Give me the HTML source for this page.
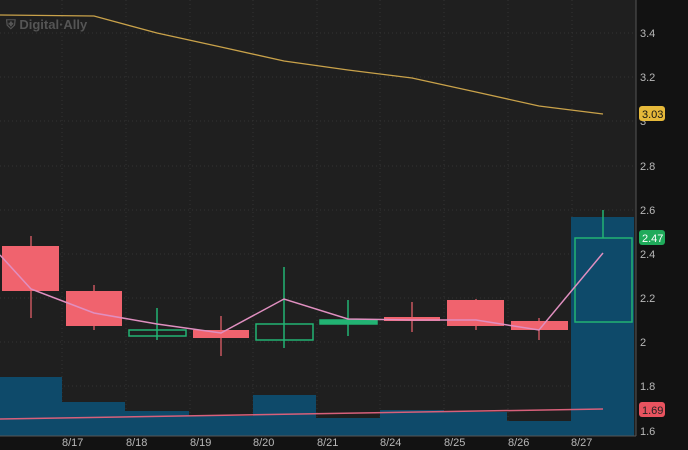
<!DOCTYPE html><html><head><style>
body{margin:0;width:688px;height:450px;background:#141414;overflow:hidden;font-family:"Liberation Sans",sans-serif}
</style></head><body>
<svg width="688" height="450" xmlns="http://www.w3.org/2000/svg" style="display:block">
<rect x="0" y="0" width="688" height="450" fill="#121212"/>
<rect x="0" y="0" width="636" height="436" fill="#1f1f1f"/>
<g stroke="#333" stroke-dasharray="1,3" stroke-width="1">
<line x1="0" x2="636" y1="33" y2="33"/><line x1="0" x2="636" y1="77" y2="77"/><line x1="0" x2="636" y1="121" y2="121"/><line x1="0" x2="636" y1="166" y2="166"/><line x1="0" x2="636" y1="210" y2="210"/><line x1="0" x2="636" y1="254" y2="254"/><line x1="0" x2="636" y1="298" y2="298"/><line x1="0" x2="636" y1="342" y2="342"/><line x1="0" x2="636" y1="386" y2="386"/>
<line y1="0" y2="436" x1="62" x2="62"/><line y1="0" y2="436" x1="126" x2="126"/><line y1="0" y2="436" x1="190" x2="190"/><line y1="0" y2="436" x1="253" x2="253"/><line y1="0" y2="436" x1="317" x2="317"/><line y1="0" y2="436" x1="380" x2="380"/><line y1="0" y2="436" x1="444" x2="444"/><line y1="0" y2="436" x1="508" x2="508"/><line y1="0" y2="436" x1="572" x2="572"/>
</g>
<g fill="#0e4a6a">
<rect x="0" y="377" width="62" height="59"/><rect x="62" y="402" width="63" height="34"/><rect x="125" y="411" width="64" height="25"/><rect x="189" y="416" width="64" height="20"/><rect x="253" y="395" width="63" height="41"/><rect x="316" y="418" width="64" height="18"/><rect x="380" y="410" width="64" height="26"/><rect x="444" y="412" width="63" height="24"/><rect x="507" y="421" width="64" height="15"/><rect x="571" y="217" width="63" height="219"/>
</g>
<polyline points="0,419 603,409" fill="none" stroke="#d8607a" stroke-width="1.5"/>
<text x="6" y="29" font-size="13" font-weight="bold" fill="#555">⛨ Digital·Ally</text>
<polyline points="0,15 94,16 157,33 221,47 284,61 348,70 412,78 476,92 539,106 603,114" fill="none" stroke="#c9a24a" stroke-width="1.3"/>
<g stroke="#f0636e" stroke-width="1.2">
<line x1="31" x2="31" y1="236" y2="318"/><line x1="94" x2="94" y1="285" y2="330"/><line x1="221" x2="221" y1="316" y2="356"/><line x1="412" x2="412" y1="302" y2="332"/><line x1="476" x2="476" y1="299" y2="330"/><line x1="539" x2="539" y1="318" y2="340"/>
</g>
<g fill="#f0636e">
<rect x="2" y="246" width="57" height="45"/><rect x="66" y="291" width="56" height="35"/><rect x="193" y="330" width="56" height="8"/><rect x="384" y="317" width="56" height="4"/><rect x="447" y="300" width="57" height="26"/><rect x="511" y="321" width="57" height="9"/>
</g>
<g stroke="#22b373" stroke-width="1.5" fill="none">
<line x1="157" x2="157" y1="308" y2="340"/><rect x="129" y="330" width="57" height="6"/>
<line x1="284" x2="284" y1="267" y2="348"/><rect x="256" y="324" width="57" height="16"/>
<line x1="348" x2="348" y1="300" y2="336"/><rect x="320" y="320" width="57" height="4" fill="#22b373"/>
<line x1="603" x2="603" y1="210" y2="238"/><rect x="575" y="238" width="57" height="84"/>
</g>
<polyline points="0,255 31,289 94,313 157,324 221,333 284,299 348,319 412,320 476,320 539,330 603,253" fill="none" stroke="#e08fc0" stroke-width="1.5"/>
<line x1="636" x2="636" y1="0" y2="436" stroke="#555"/>
<line x1="0" x2="636" y1="436" y2="436" stroke="#555"/>
<g fill="#b8b8b8" font-size="11">
<text x="640" y="37">3.4</text><text x="640" y="81">3.2</text><text x="640" y="125">3</text><text x="640" y="170">2.8</text><text x="640" y="214">2.6</text><text x="640" y="258">2.4</text><text x="640" y="302">2.2</text><text x="640" y="346">2</text><text x="640" y="390">1.8</text><text x="640" y="435">1.6</text>
<text x="62" y="446">8/17</text><text x="126" y="446">8/18</text><text x="190" y="446">8/19</text><text x="253" y="446">8/20</text><text x="317" y="446">8/21</text><text x="380" y="446">8/24</text><text x="444" y="446">8/25</text><text x="508" y="446">8/26</text><text x="571" y="446">8/27</text>
</g>
<rect x="639" y="106" width="26" height="15" rx="3" fill="#e6b93a"/><text x="642" y="118" font-size="11" fill="#111">3.03</text>
<rect x="639" y="230" width="26" height="15" rx="3" fill="#1faa5a"/><text x="642" y="242" font-size="11" fill="#fff">2.47</text>
<rect x="639" y="402" width="26" height="15" rx="3" fill="#e8535f"/><text x="642" y="414" font-size="11" fill="#222">1.69</text>
</svg>
</body></html>
